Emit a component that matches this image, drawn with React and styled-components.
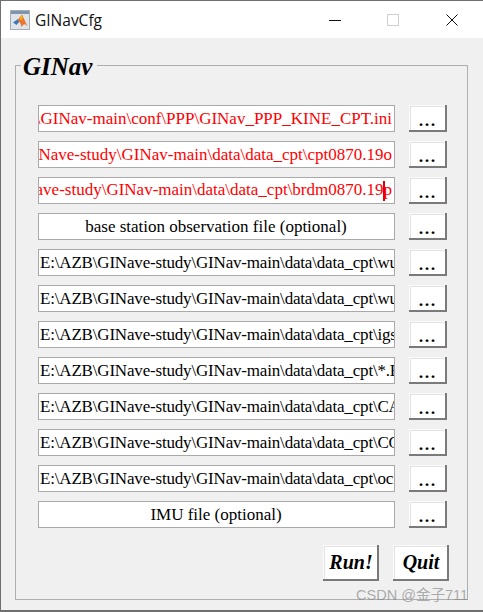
import React from 'react';
import styled, { createGlobalStyle } from 'styled-components';

const GlobalStyle = createGlobalStyle`
  html, body {
    margin: 0;
    padding: 0;
    background: #f0f0f0;
  }
`;

const Win = styled.div`
  position: relative;
  width: 483px;
  height: 612px;
  box-sizing: border-box;
  border-style: solid;
  border-color: #6f6f6f;
  border-width: 1px 0 2px 1px;
  background: #f0f0f0;
  overflow: hidden;
  font-family: "Liberation Serif", serif;
`;

const TitleBar = styled.div`
  display: flex;
  align-items: center;
  height: 37px;
  background: #fff;
  padding-left: 9px;
`;

const AppTitle = styled.span`
  margin-left: 5px;
  font: 15.5px "Open Sans", "Liberation Sans", sans-serif;
  color: #111;
`;

const WinControls = styled.div`
  display: flex;
  margin-left: auto;
  padding-right: 2px;
`;

const WinControl = styled.div`
  width: 58.5px;
  height: 37px;
  display: flex;
  align-items: center;
  justify-content: center;
`;

const Panel = styled.fieldset`
  margin: 13px 0 0 14px;
  padding: 26px 0 0;
  width: 453px;
  height: 549px;
  box-sizing: border-box;
  border: 1px solid #aeaeae;
  min-width: 0;
`;

const PanelTitle = styled.legend`
  margin-left: 5px;
  padding: 4px 5px 0 2px;
  font-size: 25px;
  line-height: 24px;
  font-weight: bold;
  font-style: italic;
  color: #000;
`;

const PanelBody = styled.div`
  padding-left: 22px;
`;

const Rows = styled.div`
  display: flex;
  flex-direction: column;
  gap: 9px;
`;

const Row = styled.div`
  display: flex;
  align-items: flex-start;
  gap: 14px;
`;

const PathField = styled.div`
  display: flex;
  align-items: center;
  justify-content: ${({ $align }) => $align || 'flex-start'};
  width: 357px;
  height: 27px;
  box-sizing: border-box;
  padding: 0 2px 0 1px;
  background: #fff;
  border: 1px solid #a9a9a9;
  overflow: hidden;
  white-space: nowrap;
  font-size: 17px;
  letter-spacing: ${({ $align }) => ($align ? '0' : '-0.18px')};
  color: ${({ $red }) => ($red ? '#f00' : '#000')};
`;

const Caret = styled.span`
  display: inline-block;
  width: 2px;
  height: 20px;
  margin: 0 -1px 0 -1px;
  background: #e00000;
  vertical-align: middle;
`;

const Browse = styled.button`
  width: 38px;
  height: 27px;
  padding: 0;
  box-sizing: border-box;
  background: #fff;
  border: 0;
  border-right: 2px solid #7a7a7a;
  border-bottom: 2px solid #7a7a7a;
  box-shadow: inset 1px 1px 0 #fbfbfb, inset 2px 2px 0 #e3e3e3;
  font: 24px/24px "Liberation Serif", serif;
  display: flex;
  align-items: flex-end;
  justify-content: center;
  color: #000;
`;

const Actions = styled.div`
  display: flex;
  justify-content: flex-end;
  gap: 14px;
  margin-top: 17px;
  width: 411px;
`;

const ActionButton = styled.button`
  width: 56px;
  height: 36px;
  padding: 0 0 0 2px;
  box-sizing: border-box;
  background: #fff;
  border: 0;
  border-right: 2px solid #7a7a7a;
  border-bottom: 2px solid #7a7a7a;
  box-shadow: inset 1px 1px 0 #fbfbfb, inset 2px 2px 0 #e3e3e3;
  font: italic bold 20px "Liberation Serif", serif;
  color: #000;
`;

const Watermark = styled.div`
  position: absolute;
  right: 15px;
  bottom: 6px;
  font: 14.5px "Liberation Sans", "Noto Sans CJK SC", sans-serif;
  color: rgba(130, 130, 130, 0.65);
`;

const base = 'E:\\AZB\\GINave-study\\GINav-main\\data\\data_cpt\\';

const rows = [
  { text: 'E:\\AZB\\GINave-study\\GINav-main\\conf\\PPP\\GINav_PPP_KINE_CPT.ini', red: true, align: 'flex-end' },
  { text: base + 'cpt0870.19o', red: true, align: 'flex-end' },
  { text: base + 'brdm0870.19', red: true, align: 'flex-end', caret: 'p' },
  { text: 'base station observation file (optional)', align: 'center' },
  { text: base + 'wum20471.sp3' },
  { text: base + 'wum20471.clk' },
  { text: base + 'igs14.atx' },
  { text: base + '*.BSX' },
  { text: base + 'CAS0MGXRAP.BIA' },
  { text: base + 'COD0MGXFIN.ERP' },
  { text: base + 'ocnload.blq' },
  { text: 'IMU file (optional)', align: 'center' },
];

const MatlabIcon = () => (
  <svg width="20" height="20" viewBox="0 0 20 20">
    <rect x="0.5" y="0.5" width="19" height="19" fill="#dfe4ea" stroke="#a4abb3" />
    <rect x="1" y="1" width="18" height="3" fill="#7f95ad" />
    <path d="M3 12.5 L8 9 L10 11 L6.5 15 Z" fill="#3f78b5" />
    <path d="M7.5 10 L12 4.5 Q14 9 17.5 16 Q15 13.5 13.5 14.5 L11.5 17 Q10.5 12.5 9 11.5 Z" fill="#e8762b" />
    <path d="M12 4.5 L9.5 8.5 L11.5 10.5 L12.8 7 Z" fill="#f6b21b" />
  </svg>
);

export default function App() {
  return (
    <>
      <GlobalStyle />
      <Win>
        <TitleBar>
          <MatlabIcon />
          <AppTitle>GINavCfg</AppTitle>
          <WinControls>
            <WinControl>
              <svg width="12" height="12" viewBox="0 0 12 12">
                <path d="M0 6.5H12" stroke="#111" />
              </svg>
            </WinControl>
            <WinControl>
              <svg width="12" height="12" viewBox="0 0 12 12">
                <rect x="0.5" y="0.5" width="11" height="11" fill="none" stroke="#cfcfcf" />
              </svg>
            </WinControl>
            <WinControl>
              <svg width="12" height="12" viewBox="0 0 12 12">
                <path d="M0.5 0.5L11.5 11.5M11.5 0.5L0.5 11.5" stroke="#111" />
              </svg>
            </WinControl>
          </WinControls>
        </TitleBar>
        <Panel>
          <PanelTitle>GINav</PanelTitle>
          <PanelBody>
            <Rows>
              {rows.map((row) => (
                <Row key={row.text}>
                  <PathField $red={row.red} $align={row.align}>
                    <span>
                      {row.text}
                      {row.caret && <Caret />}
                      {row.caret}
                    </span>
                  </PathField>
                  <Browse>...</Browse>
                </Row>
              ))}
            </Rows>
            <Actions>
              <ActionButton>Run!</ActionButton>
              <ActionButton>Quit</ActionButton>
            </Actions>
          </PanelBody>
        </Panel>
        <Watermark>CSDN @金子711</Watermark>
      </Win>
    </>
  );
}
